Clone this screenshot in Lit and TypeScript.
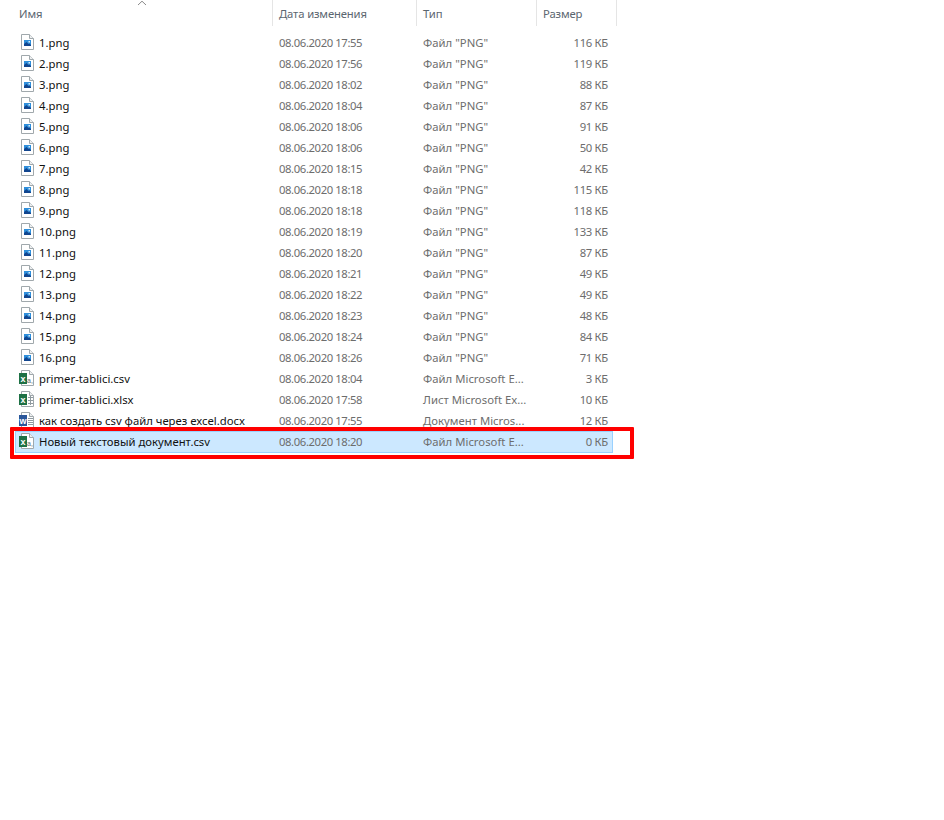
import { LitElement, html, css, svg } from 'lit';
import { customElement } from 'lit/decorators.js';

type Row = { name: string; date: string; type: string; size: string; icon: string; selected?: boolean };

const PNG = 'Файл "PNG"';
const CSV = 'Файл Microsoft E...';

const sheet = (i: number, date: string, size: string): Row => ({
  name: `${i}.png`,
  date: `08.06.2020 ${date}`,
  type: PNG,
  size,
  icon: 'png',
});

const ROWS: Row[] = [
  sheet(1, '17:55', '116 КБ'),
  sheet(2, '17:56', '119 КБ'),
  sheet(3, '18:02', '88 КБ'),
  sheet(4, '18:04', '87 КБ'),
  sheet(5, '18:06', '91 КБ'),
  sheet(6, '18:06', '50 КБ'),
  sheet(7, '18:15', '42 КБ'),
  sheet(8, '18:18', '115 КБ'),
  sheet(9, '18:18', '118 КБ'),
  sheet(10, '18:19', '133 КБ'),
  sheet(11, '18:20', '87 КБ'),
  sheet(12, '18:21', '49 КБ'),
  sheet(13, '18:22', '49 КБ'),
  sheet(14, '18:23', '48 КБ'),
  sheet(15, '18:24', '84 КБ'),
  sheet(16, '18:26', '71 КБ'),
  { name: 'primer-tablici.csv', date: '08.06.2020 18:04', type: CSV, size: '3 КБ', icon: 'csv' },
  { name: 'primer-tablici.xlsx', date: '08.06.2020 17:58', type: 'Лист Microsoft Ex...', size: '10 КБ', icon: 'xlsx' },
  { name: 'как создать csv файл через excel.docx', date: '08.06.2020 17:55', type: 'Документ Micros...', size: '12 КБ', icon: 'docx' },
  { name: 'Новый текстовый документ.csv', date: '08.06.2020 18:20', type: CSV, size: '0 КБ', icon: 'csv', selected: true },
];

// page outline with folded corner, shared by all file icons
const page = svg`
  <path d="M2.5 .5H10.5L14.5 4.5V15.5H2.5Z" fill="#fff" stroke="#a0a8ac" />
  <path d="M10.5 .5V4.5H14.5" fill="#eef0f1" stroke="#a0a8ac" />
`;

const badge = (color: string, letter: string) => svg`
  <rect x="0" y="3" width="8" height="11" fill=${color} />
  <text x="4" y="12" text-anchor="middle" class="badge">${letter}</text>
`;

const ICONS: Record<string, unknown> = {
  png: svg`
    ${page}
    <rect x="5" y="6" width="7" height="6" fill="#2f8fdb" />
    <path d="M5 12V10L7.5 8L9.5 10L10.5 9.5L12 11V12Z" fill="#12468f" />
    <rect x="9.5" y="7" width="1.5" height="1.5" fill="#d5ecfa" />
  `,
  csv: svg`
    ${page}
    ${badge('#1e7145', 'x')}
    <text x="11" y="13" text-anchor="middle" class="mini">a,</text>
  `,
  xlsx: svg`
    ${page}
    ${badge('#1e7145', 'x')}
    <path d="M9 6.5H14M9 9.5H14M9 12.5H14M11.5 5V14" stroke="#8f9aa0" fill="none" />
  `,
  docx: svg`
    ${page}
    ${badge('#2b579a', 'w')}
    <path d="M9 6.5H14M9 8.5H14M9 10.5H14M9 12.5H14" stroke="#8f9aa0" fill="none" />
  `,
};

@customElement('app-root')
export class AppRoot extends LitElement {
  static styles = css`
    :host {
      display: block;
      position: relative;
      width: 944px;
      height: 820px;
      background: #fff;
      overflow: hidden;
      font-family: 'Noto Sans', 'Open Sans', sans-serif;
      font-size: 11.3px;
      color: #6d6d6d;
    }
    .head {
      display: grid;
      grid-template-columns: 273px 144px 120px 80px;
      width: 617px;
      height: 26px;
      padding-bottom: 6px;
      color: #5b6670;
    }
    .head div {
      position: relative;
      display: flex;
      align-items: center;
      padding: 1px 0 0 6px;
      border-right: 1px solid #e5e5e5;
      letter-spacing: -0.15px;
    }
    .head div:first-child {
      padding-left: 19px;
    }
    .chevron {
      position: absolute;
      left: 137px;
      top: 0;
    }
    .row {
      display: grid;
      grid-template-columns: 257px 144px 119px 72px;
      width: 596px;
      height: 19px;
      margin-left: 15px;
      border: 1px solid transparent;
      align-items: center;
    }
    .row.selected {
      height: 19px;
      padding-bottom: 1px;
      background: #cce8ff;
      border-color: #99d1ff;
    }
    .name {
      display: flex;
      align-items: center;
      gap: 2px;
      padding-left: 3px;
      color: #111;
      white-space: nowrap;
    }
    .date,
    .type {
      white-space: nowrap;
    }
    .date {
      padding-left: 6px;
      letter-spacing: -0.4px;
    }
    .type {
      padding-left: 6px;
      letter-spacing: 0.02px;
    }
    .size {
      text-align: right;
      white-space: nowrap;
      letter-spacing: -0.3px;
    }
    svg.icon {
      display: block;
      flex: none;
      width: 18px;
      height: 17px;
    }
    .badge {
      font: bold 9px 'Liberation Sans', sans-serif;
      fill: #fff;
    }
    .mini {
      font: 7px 'Liberation Sans', sans-serif;
      fill: #5a6a72;
    }
    .marker {
      position: absolute;
      left: 10px;
      top: 427px;
      width: 616px;
      height: 24px;
      border: 4px solid #ff0000;
      border-radius: 1px;
      pointer-events: none;
    }
  `;

  render() {
    return html`
      <div class="head">
        <div>Имя</div>
        <div>Дата изменения</div>
        <div>Тип</div>
        <div>Размер</div>
      </div>
      <svg class="chevron" width="10" height="6" viewBox="0 0 10 6">
        <path d="M1 5L5 1.2L9 5" fill="none" stroke="#8a8a8a" />
      </svg>
      ${ROWS.map(
        (r) => html`
          <div class="row ${r.selected ? 'selected' : ''}">
            <div class="name">
              <svg class="icon" viewBox="0 0 18 17">${ICONS[r.icon]}</svg>
              <span>${r.name}</span>
            </div>
            <div class="date">${r.date}</div>
            <div class="type">${r.type}</div>
            <div class="size">${r.size}</div>
          </div>
        `,
      )}
      <div class="marker"></div>
    `;
  }
}
